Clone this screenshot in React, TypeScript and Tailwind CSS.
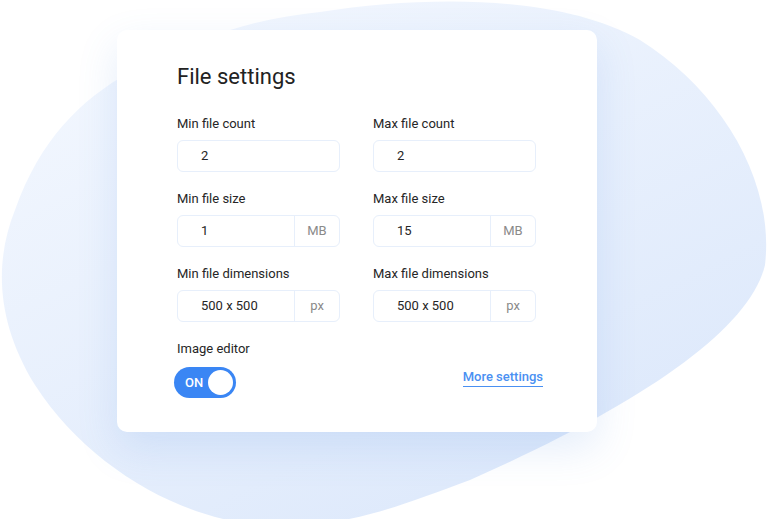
const fields = [
  { label: "Min file count", value: "2" },
  { label: "Max file count", value: "2" },
  { label: "Min file size", value: "1", unit: "MB" },
  { label: "Max file size", value: "15", unit: "MB" },
  { label: "Min file dimensions", value: "500 x 500", unit: "px" },
  { label: "Max file dimensions", value: "500 x 500", unit: "px" },
];

const Blob = () => (
  <svg
    className="absolute inset-0"
    width="768"
    height="519"
    viewBox="0 0 768 519"
    fill="none"
  >
    <defs>
      <linearGradient id="blob" x1="0.2" y1="0.1" x2="0.8" y2="0.95">
        <stop offset="0" stopColor="#f1f6fe" />
        <stop offset="1" stopColor="#dce8fb" />
      </linearGradient>
    </defs>
    <path
      d="M280 526 C190 526 90 470 35 385 C-5 320 -5 260 15 210 C40 140 80 100 130 72 C200 35 260 18 320 12 C430 -5 560 -5 640 40 C720 90 775 180 765 265 C750 330 640 405 470 480 C400 506 350 526 280 526 Z"
      fill="url(#blob)"
    />
  </svg>
);

const Field = ({ label, value, unit }: { label: string; value: string; unit?: string }) => (
  <div>
    <p className="text-[13px] leading-4 text-[#262626]">{label}</p>
    <div className="mt-2 flex h-8 rounded-[6px] border border-[#e7effb] bg-white">
      <div className="flex flex-1 items-center pl-[23px] text-[13px] text-[#262626]">
        {value}
      </div>
      {unit && (
        <div className="flex w-[45px] items-center justify-center border-l border-[#e7effb] text-[13px] text-[#8a8a8a]">
          {unit}
        </div>
      )}
    </div>
  </div>
);

export default function App() {
  return (
    <div
      className="relative h-[519px] w-[768px] overflow-hidden bg-white pl-[117px] pt-[30px]"
      style={{ fontFamily: "Roboto, 'Liberation Sans', sans-serif" }}
    >
      <Blob />
      <div className="relative h-[402px] w-[480px] rounded-[10px] bg-white pl-[60px] pt-[33px] shadow-[0_16px_40px_rgba(90,140,225,0.16)]">
        <h1 className="text-[22px] leading-[28px] text-[#222]">File settings</h1>

        {/* Fields */}
        <div className="mt-[25px] grid grid-cols-[163px_163px] gap-x-[33px] gap-y-[19px]">
          {fields.map((f) => (
            <Field key={f.label} {...f} />
          ))}
        </div>

        {/* Image editor */}
        <p className="mt-[19px] text-[13px] leading-4 text-[#262626]">Image editor</p>
        <div className="-ml-[3px] mt-[10px] flex w-[369px] items-start justify-between">
          <button className="flex h-[31px] w-[62px] items-center justify-between rounded-full bg-[#3a86f4] pl-[11px] pr-[3px]">
            <span className="text-[13px] font-medium text-white">ON</span>
            <span className="h-[25px] w-[25px] rounded-full bg-white" />
          </button>
          <a
            href="#"
            className="mt-[2px] border-b-[1.5px] border-[#4a90f2] pb-[1px] text-[13px] leading-4 font-medium text-[#4a90f2]"
          >
            More settings
          </a>
        </div>
      </div>
    </div>
  );
}
